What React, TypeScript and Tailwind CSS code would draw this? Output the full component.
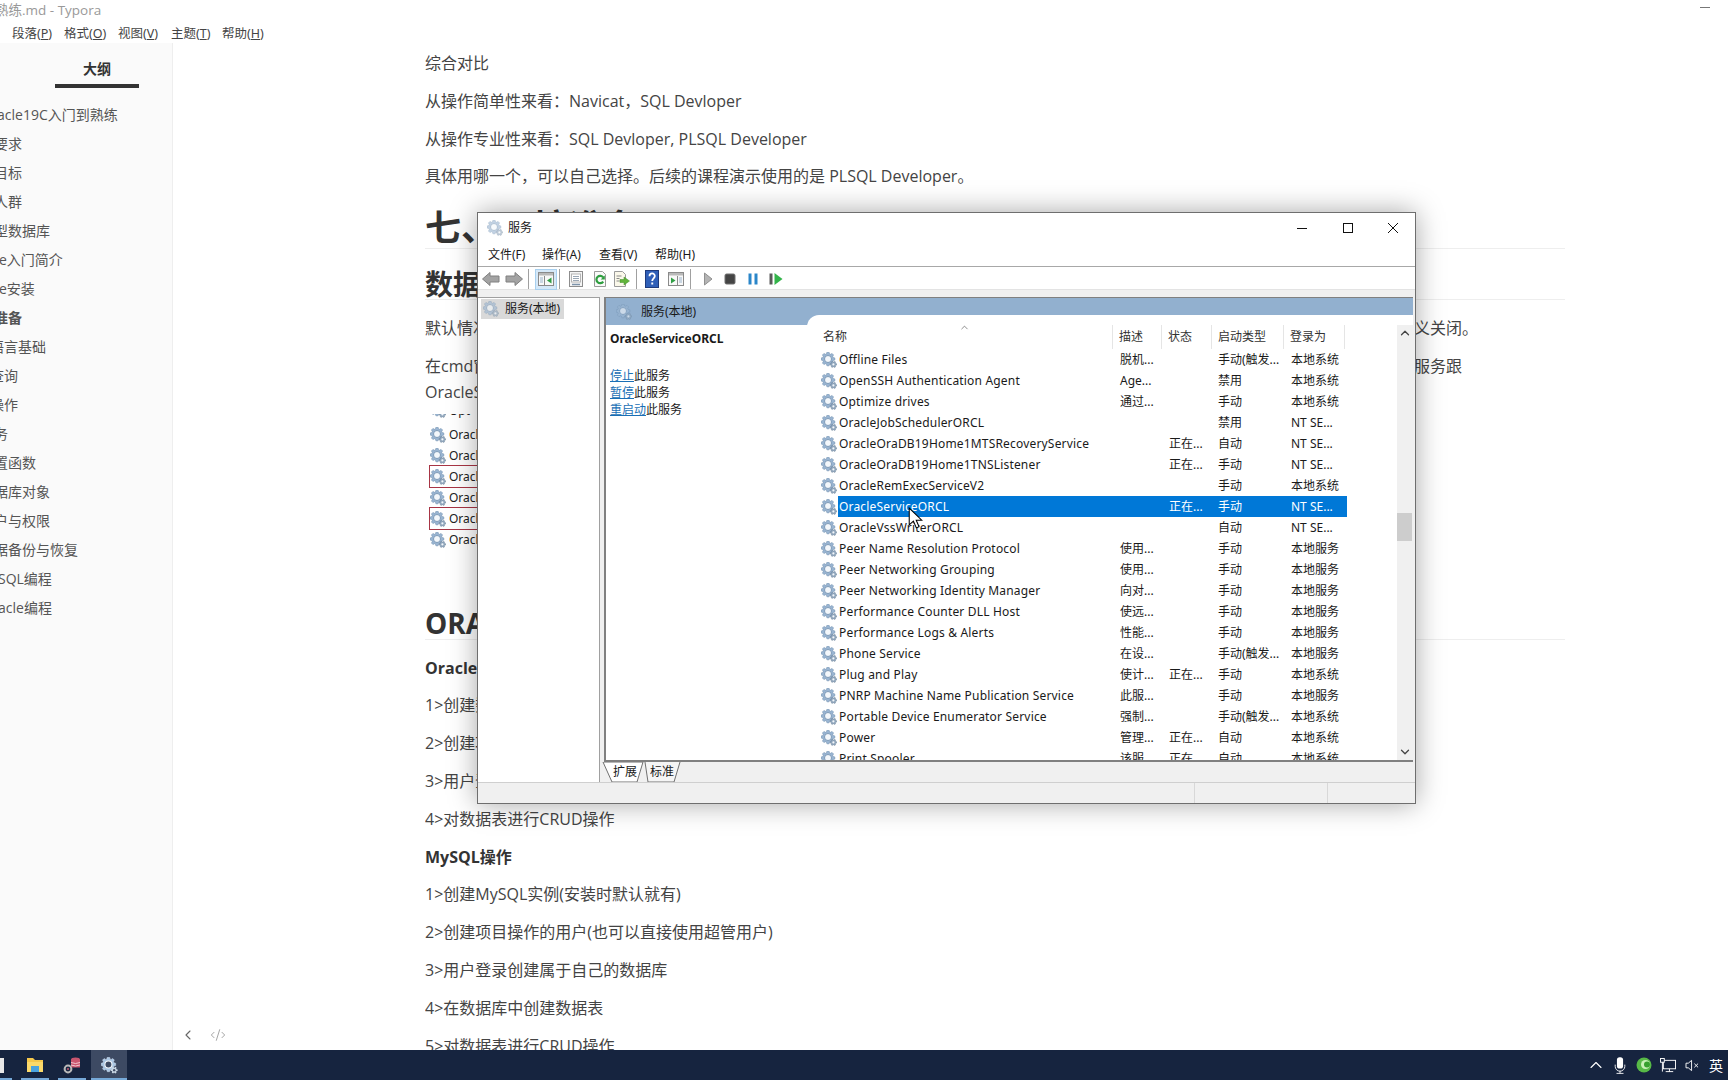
import React from "react";
import { CodeXml, ChevronLeft, ChevronUp, ChevronDown } from "lucide-react";

function gearPath(cx: number, cy: number, rOut: number, rIn: number, teeth: number) {
  const pts: string[] = [];
  const step = (Math.PI * 2) / teeth;
  for (let i = 0; i < teeth; i++) {
    const a = i * step;
    const seq: [number, number][] = [
      [a - step * 0.36, rIn],
      [a - step * 0.2, rOut],
      [a + step * 0.2, rOut],
      [a + step * 0.36, rIn],
    ];
    for (const [t, r] of seq) pts.push(`${(cx + Math.cos(t) * r).toFixed(2)} ${(cy + Math.sin(t) * r).toFixed(2)}`);
  }
  return "M" + pts.join("L") + "Z";
}
const bigGear = gearPath(7, 7, 6.9, 5.4, 8);
const smallGear = gearPath(12.4, 12.4, 3.3, 2.4, 6);

function Gear({ faint = false, className = "" }: { faint?: boolean; className?: string }) {
  return (
    <svg viewBox="0 0 16 16" className={`h-[16px] w-[16px] flex-none ${faint ? "opacity-60" : ""} ${className}`}>
      <path d={bigGear} fill="#9ab5d2" stroke="#6b8aab" strokeWidth="0.5" />
      <circle cx="7" cy="7" r="3.5" fill="#f3f7fb" stroke="#6b8aab" strokeWidth="0.8" />
      <path d={smallGear} fill="#8ea5bc" stroke="#62798f" strokeWidth="0.4" />
      <circle cx="12.4" cy="12.4" r="1.1" fill="#f3f7fb" />
    </svg>
  );
}

const I = ({ children, w = 20 }: { children: React.ReactNode; w?: number }) => (
  <svg viewBox="0 0 20 20" width={w} height={20} className="flex-none">{children}</svg>
);

const Back = () => <I><path d="M1.5 10 L9 3.5 V7 H18 V13 H9 V16.5Z" fill="#a3a3a3" stroke="#808080" /></I>;
const Forward = () => <I><path d="M18.5 10 L11 3.5 V7 H2 V13 H11 V16.5Z" fill="#a3a3a3" stroke="#808080" /></I>;
const ConsoleTree = () => (
  <I>
    <rect x="2.5" y="3.5" width="15" height="13" fill="#f8f8f8" stroke="#8a8a8a" />
    <rect x="3" y="4" width="14" height="2.5" fill="#b9b9b9" />
    <path d="M8.5 7 V16" stroke="#8a8a8a" />
    <path d="M15.5 8.5 L11 11.5 L15.5 14.5Z" fill="#2f9e44" />
    <path d="M4 9h3M4 11h3M4 13h3" stroke="#9bb4cc" />
  </I>
);
const Props = () => (
  <I>
    <rect x="3.5" y="2.5" width="13" height="15" fill="#f5f5f5" stroke="#8d8d8d" />
    <rect x="5.5" y="5" width="9" height="8" fill="#fff" stroke="#b5b5b5" />
    <path d="M7 7.5h6M7 9.5h6M7 11.5h6" stroke="#9aa7b5" />
    <path d="M6 15.5h8" stroke="#7d93aa" strokeWidth="1.5" />
  </I>
);
const Refresh = () => (
  <I>
    <path d="M4.5 2.5H12.5L15.5 5.5V17.5H4.5Z" fill="#fafafa" stroke="#9a9a9a" />
    <path d="M13.2 12.6 A3.7 3.7 0 1 1 13.2 8.4" fill="none" stroke="#2e9e3f" strokeWidth="2.2" />
    <path d="M14.8 6.5 V10.6 H10.7Z" fill="#2e9e3f" />
  </I>
);
const ExportIcon = () => (
  <I>
    <path d="M3.5 2.5H11.5L14.5 5.5V17.5H3.5Z" fill="#fbf8ea" stroke="#9a9a9a" />
    <path d="M5.5 7h5M5.5 9.5h3M5.5 12h3" stroke="#8a8a8a" />
    <path d="M9 10.5H13V8L18.5 12L13 16V13.5H9Z" fill="#61b33a" stroke="#3e8f27" strokeWidth="0.5" />
  </I>
);
const Help = () => (
  <I>
    <rect x="3.5" y="1.5" width="13" height="17" fill="#2f5fb8" stroke="#1d3a7c" />
    <path d="M7.5 7.2 C7.5 3.6 12.8 3.6 12.8 7 C12.8 9.2 10.2 9.4 10.2 12" fill="none" stroke="#ffffff" strokeWidth="1.8" />
    <rect x="9.3" y="13.5" width="1.9" height="2" fill="#fff" />
  </I>
);
const ShowAction = () => (
  <I>
    <rect x="2.5" y="3.5" width="15" height="13" fill="#f8f8f8" stroke="#8a8a8a" />
    <rect x="3" y="4" width="14" height="2.5" fill="#b9b9b9" />
    <path d="M11.5 7 V16" stroke="#8a8a8a" />
    <path d="M5 8.5 L9.5 11.5 L5 14.5Z" fill="#2f9e44" />
    <path d="M13 9h3M13 11h3M13 13h3" stroke="#9bb4cc" />
  </I>
);
const Play = () => <I><path d="M6.5 4 L14 10 L6.5 16Z" fill="#b4b4b4" stroke="#909090" /></I>;
const Stop = () => <I><rect x="5" y="5" width="10" height="10" rx="1.5" fill="#444444" stroke="#707070" /></I>;
const Pause = () => <I><path d="M5.5 4.5h3v11h-3zM11.5 4.5h3v11h-3z" fill="#2a86c9" /></I>;
const Resume = () => <I><rect x="3.5" y="4.5" width="3" height="11" fill="#5a5a5a" /><path d="M8.5 4 L16.5 10 L8.5 16Z" fill="#33b44a" /></I>;
const Sep = ({ className = "" }: { className?: string }) => <div className={`h-[20px] w-px flex-none bg-[#a0a0a0] ${className}`} />;

const nameFont = "font-['Noto_Sans','Noto_Sans_CJK_SC',sans-serif]";
const docFont = "font-['Open_Sans','Noto_Sans_CJK_SC',sans-serif]";

type Row = [string, string, string, string, string];
const rows: Row[] = [
  ["Offline Files", "脱机...", "", "手动(触发...", "本地系统"],
  ["OpenSSH Authentication Agent", "Age...", "", "禁用", "本地系统"],
  ["Optimize drives", "通过...", "", "手动", "本地系统"],
  ["OracleJobSchedulerORCL", "", "", "禁用", "NT SE..."],
  ["OracleOraDB19Home1MTSRecoveryService", "", "正在...", "自动", "NT SE..."],
  ["OracleOraDB19Home1TNSListener", "", "正在...", "手动", "NT SE..."],
  ["OracleRemExecServiceV2", "", "", "手动", "本地系统"],
  ["OracleServiceORCL", "", "正在...", "手动", "NT SE..."],
  ["OracleVssWriterORCL", "", "", "自动", "NT SE..."],
  ["Peer Name Resolution Protocol", "使用...", "", "手动", "本地服务"],
  ["Peer Networking Grouping", "使用...", "", "手动", "本地服务"],
  ["Peer Networking Identity Manager", "向对...", "", "手动", "本地服务"],
  ["Performance Counter DLL Host", "使远...", "", "手动", "本地服务"],
  ["Performance Logs & Alerts", "性能...", "", "手动", "本地服务"],
  ["Phone Service", "在设...", "", "手动(触发...", "本地服务"],
  ["Plug and Play", "使计...", "正在...", "手动", "本地系统"],
  ["PNRP Machine Name Publication Service", "此服...", "", "手动", "本地服务"],
  ["Portable Device Enumerator Service", "强制...", "", "手动(触发...", "本地系统"],
  ["Power", "管理...", "正在...", "自动", "本地系统"],
  ["Print Spooler", "该服...", "正在...", "自动", "本地系统"],
];

const outline: [string, string][] = [
  ["acle19C入门到熟练", "-ml-[3px]"],
  ["要求", "-ml-[6px]"],
  ["目标", "-ml-[6px]"],
  ["人群", "-ml-[6px]"],
  ["型数据库", "-ml-[6px]"],
  ["e入门简介", "-ml-[1px]"],
  ["e安装", "-ml-[1px]"],
  ["准备", "-ml-[6px] font-bold"],
  ["语言基础", "-ml-[10px]"],
  ["查询", "-ml-[10px]"],
  ["操作", "-ml-[10px]"],
  ["务", "-ml-[6px]"],
  ["置函数", "-ml-[6px]"],
  ["据库对象", "-ml-[6px]"],
  ["户与权限", "-ml-[6px]"],
  ["据备份与恢复", "-ml-[6px]"],
  ["SQL编程", "-ml-[2px]"],
  ["acle编程", "-ml-[2px]"],
];

const P = ({ children, className = "" }: { children: React.ReactNode; className?: string }) => (
  <p className={`mb-[12.2px] h-[25.6px] whitespace-nowrap leading-[25.6px] ${className}`}>{children}</p>
);

const docRows = [
  "",
  "",
  "outline outline-1 outline-[#a83545]",
  "",
  "outline outline-1 outline-[#a83545]",
  "",
];

export default function App() {
  return (
    <div className={`relative flex h-[1080px] w-[1728px] flex-col overflow-hidden bg-white ${docFont} text-[#333]`}>
      {/* Typora title */}
      <div className="flex h-[23px] flex-none items-center justify-between pb-[2px] text-[13.5px] text-[#999]">
        <span className="-ml-[5px] whitespace-nowrap">熟练.md - Typora</span>
        <div className="mb-[6px] mr-[18px] h-px w-[10px] bg-[#777]" />
      </div>
      {/* Typora menu */}
      <div className={`flex h-[20px] flex-none items-center pl-[12px] pt-[2px] text-[12.5px] text-[#444] ${nameFont}`}>
        <span className="w-[52px]">段落(<u>P</u>)</span>
        <span className="w-[54px]">格式(<u>O</u>)</span>
        <span className="w-[53px]">视图(<u>V</u>)</span>
        <span className="w-[51px]">主题(<u>T</u>)</span>
        <span>帮助(<u>H</u>)</span>
      </div>

      <div className="relative flex min-h-0 flex-1">
        {/* Outline */}
        <aside className="w-[173px] flex-none overflow-hidden border-r border-[#eeeeee] bg-[#fafafa] text-[14px] text-[#555]">
          <div className="ml-[55px] h-[45px] w-[84px] border-b-4 border-[#333] pt-[15px] text-center text-[14px] font-bold leading-[22px] text-[#333]">大纲</div>
          <div className="mt-[12px]">
            {outline.map(([t, c]) => (
              <div key={t} className={`h-[29px] whitespace-nowrap leading-[29px] ${c}`}>{t}</div>
            ))}
          </div>
        </aside>

        {/* Document */}
        <main className="ml-[252px] w-[1140px] flex-none overflow-hidden pt-[8px] text-[16px] text-[#444]">
          <P>综合对比</P>
          <P>从操作简单性来看：Navicat，SQL Devloper</P>
          <P>从操作专业性来看：SQL Devloper, PLSQL Developer</P>
          <P>具体用哪一个，可以自己选择。后续的课程演示使用的是 PLSQL Developer。</P>
          <h1 className="h-[46.4px] border-b border-[#eeeeee] pt-[6px] text-[36px] font-bold leading-[40px] text-[#333]">七、环境准备</h1>
          <h2 className="h-[51px] border-b border-[#eeeeee] pt-[21px] text-[28px] font-bold leading-[28px] text-[#333]">数据库服务</h2>
          <p className="mb-[12.2px] mt-[16.8px] flex h-[25.6px] leading-[25.6px]">
            <span className="w-[989px] flex-none overflow-hidden whitespace-nowrap">默认情况下</span>
            <span className="whitespace-nowrap">义关闭。</span>
          </p>
          <p className="flex h-[25.6px] leading-[25.6px]">
            <span className="w-[989px] flex-none overflow-hidden whitespace-nowrap">在cmd窗口</span>
            <span className="whitespace-nowrap">服务跟</span>
          </p>
          <p className="h-[24px] leading-[24px]">OracleServiceORCL</p>

          <div className={`mt-[10px] w-[60px] pl-[5px] text-[12px] text-[#222] ${nameFont}`}>
            <div className="mb-[5.5px] flex h-[5px] items-start gap-[3px] overflow-hidden">
              <Gear className="-mt-[12px]" />
              <span className="-mt-[12px]">Opt</span>
            </div>
            {docRows.map((c, i) => (
              <div key={i} className={`flex h-[21px] w-[56px] items-center gap-[3px] ${c}`}>
                <Gear />
                <span>Oracle</span>
              </div>
            ))}
          </div>

          <h2 className="mt-[49.5px] h-[40px] border-b border-[#eeeeee] pt-[9px] text-[28px] font-bold leading-[28px] text-[#333]">ORACLE</h2>
          <P className="mb-[9.4px] mt-[16px] font-bold text-[#333]">Oracle操作</P>
          <P>1&gt;创建数据库实例</P>
          <P>2&gt;创建项目操作的用户</P>
          <P>3&gt;用户登录创建表</P>
          <P>4&gt;对数据表进行CRUD操作</P>
          <P className="font-bold text-[#333]">MySQL操作</P>
          <P>1&gt;创建MySQL实例(安装时默认就有)</P>
          <P>2&gt;创建项目操作的用户(也可以直接使用超管用户)</P>
          <P>3&gt;用户登录创建属于自己的数据库</P>
          <P>4&gt;在数据库中创建数据表</P>
          <P>5&gt;对数据表进行CRUD操作</P>
        </main>

        {/* Status corner of Typora */}
        <div className="absolute bottom-[7px] left-[180px] flex items-center gap-[14px] text-[#666]">
          <ChevronLeft size={16} strokeWidth={1.6} />
          <CodeXml size={16} strokeWidth={1} className="text-[#777]" />
        </div>
      </div>

      {/* Taskbar */}
      <footer className={`flex h-[30px] flex-none items-stretch bg-[#16243f] ${nameFont}`}>
        <div className="relative w-[12px] flex-none">
          <div className="absolute left-0 top-[8px] h-[15px] w-[4px] bg-[#e8e8e8]" />
          <div className="absolute inset-x-0 bottom-0 h-[2px] bg-[#76a9d8]" />
        </div>
        <div className="relative ml-[9px] flex w-[28px] flex-none items-center justify-center">
          <svg viewBox="0 0 18 16" width={18} height={16}>
            <path d="M1 1H7L9 3H17V15H1Z" fill="#f5c84c" />
            <rect x="1" y="5" width="16" height="10" fill="#fbd96a" />
            <rect x="5" y="9" width="8" height="6" fill="#4aa3df" />
          </svg>
          <div className="absolute inset-x-0 bottom-0 h-[2px] bg-[#76a9d8]" />
        </div>
        <div className="relative ml-[9px] flex w-[28px] flex-none items-center justify-center">
          <svg viewBox="0 0 18 18" width={18} height={18}>
            <ellipse cx="12.5" cy="3.5" rx="4.5" ry="2" fill="#c9566f" />
            <rect x="8" y="3.5" width="9" height="8" fill="#c9566f" />
            <path d="M8 6.5q4.5 2 9 0M8 9q4.5 2 9 0" stroke="#f1c6cf" fill="none" />
            <circle cx="5" cy="13" r="3.4" fill="none" stroke="#b9b9b9" strokeWidth="2" />
            <circle cx="5" cy="13" r="1" fill="#c9566f" />
          </svg>
          <div className="absolute inset-x-0 bottom-0 h-[2px] bg-[#76a9d8]" />
        </div>
        <div className="relative ml-[5px] flex w-[36px] flex-none items-center justify-center bg-[#3d4a63]">
          <svg viewBox="0 0 16 16" width={17} height={17}>
            <path d={bigGear} fill="#a9c6e4" stroke="#dfeaf5" strokeWidth="0.4" />
            <circle cx="7" cy="7" r="3.3" fill="#3d4a63" stroke="#f3f7fb" />
            <path d={smallGear} fill="#c8d6e4" />
            <circle cx="12.4" cy="12.4" r="1.1" fill="#3d4a63" />
          </svg>
          <div className="absolute inset-x-0 bottom-0 h-[2px] bg-[#76a9d8]" />
        </div>
        <div className="ml-auto flex items-center text-white">
          <div className="flex w-[24px] justify-center"><ChevronUp size={20} strokeWidth={1.3} /></div>
          <div className="flex w-[24px] justify-center">
            <svg viewBox="0 0 16 20" width={14} height={19}>
              <rect x="4.5" y="0.5" width="7" height="13" rx="3" fill="#fff" />
              <path d="M2.5 9v2a5.5 5.5 0 0 0 11 0V9M8 16v3M4 19h8" stroke="#fff" fill="none" />
            </svg>
          </div>
          <div className="flex w-[24px] justify-center">
            <svg viewBox="0 0 16 16" width={16} height={16}>
              <circle cx="8" cy="8" r="7.5" fill="#57b947" />
              <circle cx="9.5" cy="7.5" r="4.5" fill="#c9f0b8" />
              <circle cx="11" cy="7.5" r="3" fill="#37a02f" />
            </svg>
          </div>
          <div className="flex w-[24px] justify-center">
            <svg viewBox="0 0 18 16" width={17} height={15} fill="none" stroke="#fff">
              <rect x="3.5" y="2.5" width="13" height="9" />
              <rect x="0.5" y="0.5" width="4" height="4" fill="#16243f" />
              <path d="M6 14.5h8M10 11.5v3M2.5 4.5v10" />
            </svg>
          </div>
          <div className="flex w-[24px] justify-center">
            <svg viewBox="0 0 16 14" width={15} height={13} fill="none" stroke="#fff">
              <path d="M1 4.5h2.5L7 1.5v11L3.5 9.5H1Z" />
              <path d="M10 5l4 4M14 5l-4 4" />
            </svg>
          </div>
          <div className="w-[24px] text-center text-[14px]">英</div>
        </div>
      </footer>

      {/* Services window */}
      <div className={`absolute left-[477px] top-[212px] z-10 flex h-[592px] w-[939px] flex-col border border-[#6e6e6e] bg-[#f0f0f0] text-[12px] text-[#1a1a1a] shadow-[0_0_26px_rgba(0,0,0,0.35)] ${nameFont}`}>
        <div className="flex h-[31px] flex-none items-center bg-white pb-[1px] pl-[9px]">
          <Gear faint />
          <span className="ml-[5px]">服务</span>
          <div className="ml-auto flex items-center">
            <div className="flex w-[46px] justify-center">
              <svg width="12" height="12"><path d="M1 6.5H11" stroke="#111" /></svg>
            </div>
            <div className="flex w-[46px] justify-center">
              <svg width="12" height="12"><rect x="1.5" y="1.5" width="9" height="9" fill="none" stroke="#111" /></svg>
            </div>
            <div className="flex w-[44px] justify-center">
              <svg width="12" height="12"><path d="M1 1L11 11M11 1L1 11" stroke="#111" /></svg>
            </div>
          </div>
        </div>
        <div className="flex h-[23px] flex-none items-center border-b border-[#a8a8a8] bg-white pb-[1px] pl-[10px]">
          <span className="w-[54px]">文件(F)</span>
          <span className="w-[57px]">操作(A)</span>
          <span className="w-[56px]">查看(V)</span>
          <span>帮助(H)</span>
        </div>
        <div className="flex h-[23px] flex-none items-center border-b border-[#e3e3e3] bg-white pl-[3px] pt-[2px]">
          <Back />
          <div className="ml-[3px]"><Forward /></div>
          <Sep className="ml-[4px]" />
          <div className="ml-[6px] flex h-[21px] w-[22px] flex-none items-center justify-center border border-[#a8d0ef] bg-[#d5e8f8]"><ConsoleTree /></div>
          <Sep className="ml-[2px]" />
          <div className="ml-[6px]"><Props /></div>
          <div className="ml-[4px]"><Refresh /></div>
          <div className="ml-[1px]"><ExportIcon /></div>
          <Sep className="ml-[5px]" />
          <div className="ml-[5px]"><Help /></div>
          <div className="ml-[4px]"><ShowAction /></div>
          <Sep className="ml-[4px]" />
          <div className="ml-[7px]"><Play /></div>
          <div className="ml-[2px]"><Stop /></div>
          <div className="ml-[3px]"><Pause /></div>
          <div className="ml-[3px]"><Resume /></div>
        </div>

        <div className="mt-[7px] flex min-h-0 flex-1">
          {/* Tree */}
          <div className="w-[122px] flex-none border-r border-t border-[#a0a0a0] bg-white pl-[3px] pt-[1px]">
            <div className="flex h-[20px] w-[83px] items-center gap-[6px] bg-[#d9d9d9] pl-[2px]">
              <Gear faint />
              <span className="whitespace-nowrap">服务(本地)</span>
            </div>
          </div>

          {/* Right */}
          <div className="ml-[4px] mr-[2px] flex min-w-0 flex-1 flex-col">
            <div className="flex min-h-0 flex-1 flex-col border-l-2 border-t border-[#808080] bg-white">
              <div className="flex h-[27px] flex-none items-center bg-[#92b0cf] pl-[10px]">
                <Gear faint className="opacity-50" />
                <span className="ml-[9px]">服务(本地)</span>
              </div>
              <div className="flex min-h-0 flex-1">
                <div className="w-[201px] flex-none pl-[4px] pt-[5px]">
                  <div className="font-bold leading-[17px]">OracleServiceORCL</div>
                  <div className="mt-[20px] leading-[17px]">
                    <div><a className="text-[#1a6fb5] underline">停止</a>此服务</div>
                    <div><a className="text-[#1a6fb5] underline">暂停</a>此服务</div>
                    <div><a className="text-[#1a6fb5] underline">重启动</a>此服务</div>
                  </div>
                </div>
                <div className="relative z-10 -mt-[10px] flex min-w-0 flex-1 rounded-tl-[12px] bg-white">
                  <div className="min-w-0 flex-1 overflow-hidden pt-[10px]">
                    <div className="flex h-[24px] items-center pl-[15px] text-[#333]">
                      <div className="relative flex h-full w-[291px] flex-none items-center border-r border-[#e5e5e5] pl-[1px]">
                        名称
                        <ChevronUp size={11} strokeWidth={1.2} className="absolute -top-[3px] left-[137px] text-[#333]" />
                      </div>
                      <div className="flex h-full w-[49px] flex-none items-center border-r border-[#e5e5e5] pl-[6px]">描述</div>
                      <div className="flex h-full w-[50px] flex-none items-center border-r border-[#e5e5e5] pl-[6px]">状态</div>
                      <div className="flex h-full w-[72px] flex-none items-center border-r border-[#e5e5e5] pl-[6px]">启动类型</div>
                      <div className="flex h-full w-[61px] flex-none items-center border-r border-[#e5e5e5] pl-[6px]">登录为</div>
                    </div>
                    {rows.map((r) => {
                      const sel = r[0] === "OracleServiceORCL";
                      return (
                        <div key={r[0]} className="flex h-[21px] items-center pl-[14px]">
                          <Gear />
                          <div className={`ml-[1px] flex h-[21px] w-[509px] flex-none items-center whitespace-nowrap ${sel ? "bg-[#0078d7] text-white" : ""}`}>
                            <div className="w-[275px] flex-none pl-[1px] tracking-[0.18px]">{r[0]}</div>
                            <div className="w-[49px] flex-none pl-[7px]">{r[1]}</div>
                            <div className="w-[50px] flex-none pl-[7px]">{r[2]}</div>
                            <div className="w-[72px] flex-none pl-[6px]">{r[3]}</div>
                            <div className="w-[63px] flex-none pl-[7px]">{r[4]}</div>
                          </div>
                        </div>
                      );
                    })}
                  </div>
                  <div className="relative mt-[10px] flex w-[16px] flex-none flex-col items-center justify-between bg-[#f0f0f0] py-[1px] text-[#444]">
                    <ChevronUp size={14} strokeWidth={2.2} />
                    <div className="absolute left-0 top-[188px] h-[28px] w-[15px] bg-[#cdcdcd]" />
                    <ChevronDown size={14} strokeWidth={2.2} />
                  </div>
                </div>
              </div>
            </div>
            {/* Tabs */}
            <div className="relative h-[22px] flex-none border-t-2 border-[#808080] bg-[#f0f0f0]">
              <svg viewBox="0 0 90 20" width={90} height={20} className="absolute left-[-2px] top-0">
                <path d="M1 0 L10 20 H35 L41 0Z" fill="#ffffff" stroke="#707070" />
                <path d="M43 0 L46 20 H72 L78 0" fill="#f5f5f5" stroke="#707070" />
              </svg>
              <div className="relative flex h-[20px] items-center pl-[9px]">
                <span className="w-[37px]">扩展</span>
                <span>标准</span>
              </div>
            </div>
          </div>
        </div>

        {/* Status bar */}
        <div className="flex h-[21px] flex-none border-t border-[#cfcfcf]">
          <div className="w-[717px] border-r border-[#d8d8d8]" />
          <div className="w-[133px] border-r border-[#d8d8d8]" />
        </div>
      </div>

      {/* Mouse pointer */}
      <svg viewBox="0 0 14 22" width={15} height={23} className="absolute left-[908px] top-[507px] z-20">
        <path d="M1 1 V17 L5 13.5 L7.8 20 L10.4 18.9 L7.7 12.6 H13Z" fill="#ffffff" stroke="#000000" strokeWidth="1" />
      </svg>
    </div>
  );
}
